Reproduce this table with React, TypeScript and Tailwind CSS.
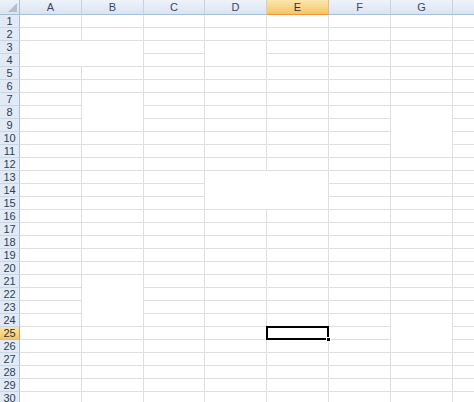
import React from 'react';

const COLS = ['A', 'B', 'C', 'D', 'E', 'F', 'G', 'H'];
const ROW_COUNT = 30;
const ACTIVE = { row: 25, col: 4 };

interface Merge {
  r: number;
  c: number;
  rs: number;
  cs: number;
}

// merged blocks (1-based rows, 0-based columns)
const merges: Merge[] = [
  { r: 3, c: 0, rs: 2, cs: 2 },
  { r: 3, c: 3, rs: 2, cs: 1 },
  { r: 7, c: 1, rs: 3, cs: 1 },
  { r: 8, c: 6, rs: 4, cs: 1 },
  { r: 13, c: 3, rs: 3, cs: 2 },
  { r: 21, c: 1, rs: 4, cs: 1 },
  { r: 24, c: 6, rs: 3, cs: 1 },
];

const rowSpanClass: Record<number, string> = {
  1: '',
  2: 'row-span-2',
  3: 'row-span-3',
  4: 'row-span-4',
};

const colSpanClass: Record<number, string> = {
  1: '',
  2: 'col-span-2',
};

const findMerge = (r: number, c: number) => merges.find((m) => m.r === r && m.c === c);

const isCovered = (r: number, c: number) =>
  merges.some(
    (m) => r >= m.r && r < m.r + m.rs && c >= m.c && c < m.c + m.cs && !(r === m.r && c === m.c)
  );

const CornerCell: React.FC = () => (
  <div className="relative border-r border-b border-[#a9bfd6] bg-linear-to-b from-[#eef3fa] to-[#d9e4f2]">
    <svg className="absolute right-[2px] bottom-[2px]" width="9" height="9" viewBox="0 0 9 9">
      <polygon points="9,0 9,9 0,9" fill="#b4c0cf" />
    </svg>
  </div>
);

const ColumnHeader: React.FC<{ label: string; active: boolean; last: boolean }> = ({ label, active, last }) => (
  <div
    className={
      active
        ? 'flex items-center justify-center border-r border-b border-r-[#f2b96a] border-b-[#f29436] bg-linear-to-b from-[#fbe6ad] to-[#f3c663] text-[11px] leading-none text-[#333]'
        : `flex items-center justify-center border-b border-b-[#a9bfd6] ${last ? '' : 'border-r border-r-[#c3d2e4]'} bg-linear-to-b from-[#eef3fa] to-[#d9e4f2] text-[11px] leading-none text-[#3a4a5e]`
    }
  >
    {last ? null : label}
  </div>
);

const RowHeader: React.FC<{ n: number; active: boolean }> = ({ n, active }) => (
  <div
    className={
      active
        ? 'flex items-center justify-center border-r border-b border-r-[#f29436] border-b-[#f2b96a] bg-linear-to-b from-[#fbe6ad] to-[#f3c663] text-[11px] leading-none text-[#333]'
        : 'flex items-center justify-center border-r border-b border-r-[#a9bfd6] border-b-[#c9d6e6] bg-[#e2eaf6] text-[11px] leading-none text-[#2f3f53]'
    }
  >
    {n}
  </div>
);

const Cell: React.FC<{ r: number; c: number }> = ({ r, c }) => {
  const merge = findMerge(r, c);
  const last = c === COLS.length - 1;
  const active = r === ACTIVE.row && c === ACTIVE.col;
  return (
    <div
      className={`relative bg-white border-b border-[#dfdfdf] ${last ? '' : 'border-r'} ${
        merge ? `${rowSpanClass[merge.rs]} ${colSpanClass[merge.cs]}` : ''
      }`}
    >
      {active && (
        <>
          <div className="absolute -left-px -top-px -right-px -bottom-px z-10 border-2 border-black" />
          <div className="absolute -right-[3px] -bottom-[3px] z-20 h-[5px] w-[5px] border border-white bg-black" />
        </>
      )}
    </div>
  );
};

const App: React.FC = () => {
  const rows = Array.from({ length: ROW_COUNT }, (_, i) => i + 1);

  return (
    <div className="h-[402px] w-[474px] overflow-hidden bg-white font-['Liberation_Sans',Arial,sans-serif]">
      <div className="grid grid-cols-[20px_62px_62px_61px_62px_62px_62px_62px_1fr] grid-rows-[15px_repeat(30,13px)]">
        <CornerCell />
        {COLS.map((label, c) => (
          <ColumnHeader key={label} label={label} active={c === ACTIVE.col} last={c === COLS.length - 1} />
        ))}
        {rows.map((r) => (
          <React.Fragment key={r}>
            <RowHeader n={r} active={r === ACTIVE.row} />
            {COLS.map((label, c) => (isCovered(r, c) ? null : <Cell key={`${label}${r}`} r={r} c={c} />))}
          </React.Fragment>
        ))}
      </div>
    </div>
  );
};

export default App;
